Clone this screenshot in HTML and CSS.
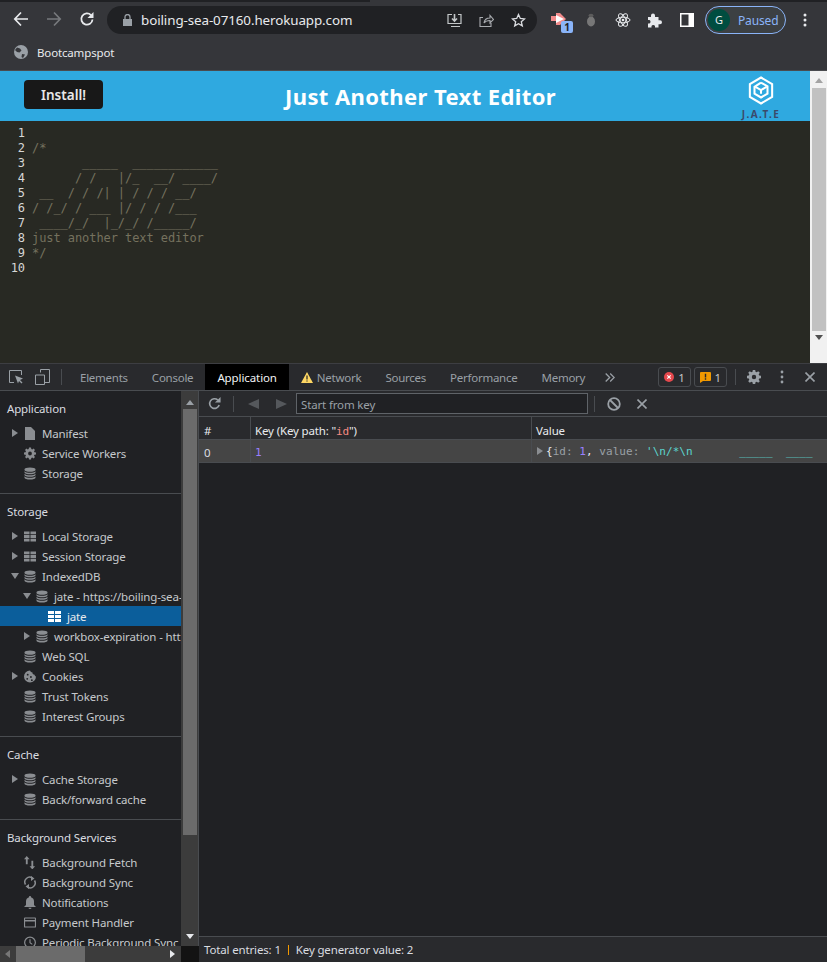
FILE: index.html
```html
<!DOCTYPE html>
<html lang="en">
<head>
<meta charset="utf-8">
<title>J.A.T.E</title>
<link rel="stylesheet" href="styles.css">
</head>
<body>
<svg class="defs" width="0" height="0" aria-hidden="true">
  <defs>
    <symbol id="db" viewBox="0 0 12 12"><path fill="#8a8d91" d="M6 0C3 0 .5.7.5 1.8v.7C.5 3.600 3 4.300 6 4.300s5.500-.7 5.500-1.800v-.7C11.500.7 9 0 6 0zM.5 3.700v1.300C.5 6.100 3 6.800 6 6.800s5.500-.7 5.500-1.800V3.700C10.500 4.700 8.300 5.200 6 5.200S1.500 4.700.5 3.700zm0 2.500v1.300C.5 8.600 3 9.300 6 9.300s5.500-.7 5.500-1.800V6.200C10.500 7.200 8.300 7.700 6 7.700S1.500 7.200.5 6.200zm0 2.500v1.500C.5 11.300 3 12 6 12s5.500-.7 5.500-1.800V8.700C10.500 9.700 8.300 10.200 6 10.200S1.500 9.700.5 8.700z"/></symbol>
    <symbol id="grid" viewBox="0 0 13 11"><path fill="currentColor" d="M0 0h6v3H0zM7 0h6v3H7zM0 4h6v3H0zM7 4h6v3H7zM0 8h6v3H0zM7 8h6v3H7z"/></symbol>
    <symbol id="tri-r" viewBox="0 0 6 8"><path fill="#8a8d91" d="M0 0l6 4-6 4z"/></symbol>
    <symbol id="tri-d" viewBox="0 0 8 6"><path fill="#8a8d91" d="M0 0h8L4 6z"/></symbol>
  </defs>
</svg>

<header class="chrome">
  <div class="tabstrip"><span class="tab-left"></span><span class="tab-active"></span><span class="tab-right"></span></div>
  <div class="navbar">
    <svg class="nav-ic first" width="16" height="16" viewBox="0 0 16 16"><path fill="none" stroke="#e8eaed" stroke-width="1.700" d="M15 8H2M8 1.500L1.800 8 8 14.500"/></svg>
    <svg class="nav-ic" width="16" height="16" viewBox="0 0 16 16"><path fill="none" stroke="#77797d" stroke-width="1.700" d="M1 8h13M8 1.500L14.200 8 8 14.500"/></svg>
    <svg class="nav-ic" width="16" height="16" viewBox="0 0 16 16"><path fill="none" stroke="#e8eaed" stroke-width="1.800" d="M13.500 8.500A5.600 5.600 0 1 1 12 4.200"/><path fill="#e8eaed" d="M14.500 1v6h-6z"/></svg>
    <div class="omnibox">
      <svg class="lock" width="9" height="12" viewBox="0 0 9 12"><path fill="#9aa0a6" d="M0 5h9v7H0z"/><path fill="none" stroke="#9aa0a6" stroke-width="1.300" d="M2 5V3a2.500 2.500 0 0 1 5 0v2"/></svg>
      <span class="url">boiling-sea-07160.herokuapp.com</span>
      <span class="omni-actions">
        <svg width="15" height="15" viewBox="0 0 15 15"><path fill="none" stroke="#c4c7c9" stroke-width="1.200" d="M5 1.500H1v9h13v-9h-3M4 13.500h9"/><path fill="none" stroke="#c4c7c9" stroke-width="1.600" d="M7.500 1v6.500M5 5.500l2.500 2.500L10 5.500"/></svg>
        <svg width="15" height="15" viewBox="0 0 15 15"><path fill="none" stroke="#a9acb0" stroke-width="1.100" d="M12 10v3.500H1V4.500h3M5 10c.5-3.500 3-5 6-5V2.500L14.500 6.500 11 10V7.500C9 7.500 6.500 8 5 10z"/></svg>
        <svg width="15" height="15" viewBox="0 0 15 15"><path fill="none" stroke="#dadce0" stroke-width="1.300" d="M7.500 1.500l1.800 4 4.200.4-3.200 2.800 1 4.200-3.800-2.200-3.800 2.200 1-4.200L1.500 5.900l4.200-.4z"/></svg>
      </span>
    </div>
    <div class="exts">
      <span class="ext-rec">
        <svg width="16" height="12" viewBox="0 0 16 12"><path fill="#f28b8b" d="M0 3h5V0h4l6 6-6 6H5V8H0z"/><path fill="#fff" d="M5 2l8 4-8 4z"/></svg>
        <span class="ext-badge">1</span>
      </span>
      <svg class="ext-bug" width="10" height="14" viewBox="0 0 10 14"><ellipse cx="5" cy="8.500" rx="4" ry="5" fill="#777"/><ellipse cx="5" cy="2.500" rx="2.500" ry="1.800" fill="#5c5c5c"/></svg>
      <svg class="ext-react" width="16" height="14" viewBox="0 0 16 14"><g fill="none" stroke="#e8eaed" stroke-width="1"><ellipse cx="8" cy="7" rx="7" ry="2.800"/><ellipse cx="8" cy="7" rx="7" ry="2.800" transform="rotate(60 8 7)"/><ellipse cx="8" cy="7" rx="7" ry="2.800" transform="rotate(120 8 7)"/></g><circle cx="8" cy="7" r="1.300" fill="#e8eaed"/></svg>
      <svg class="ext-puzzle" width="15" height="15" viewBox="0 0 15 15"><path fill="#e8eaed" d="M1 4h3V2.500a2 2 0 0 1 4 0V4h3.500v3.200H13a2 2 0 0 1 0 4h-1.500V14.500H8v-1.500a2 2 0 0 0-3.500 0v1.500H1V10.500h1.500a2 2 0 0 0 0-3.500H1z"/></svg>
      <svg class="ext-side" width="14" height="14" viewBox="0 0 14 14"><path fill="#fff" d="M0 0h14v14H0z"/><path fill="#35363a" d="M1.500 1.500h7v11h-7z"/></svg>
      <span class="profile"><span class="avatar">G</span><span class="paused">Paused</span></span>
      <svg class="kebab" width="4" height="14" viewBox="0 0 4 14"><g fill="#e8eaed"><circle cx="2" cy="2" r="1.500"/><circle cx="2" cy="7" r="1.500"/><circle cx="2" cy="12" r="1.500"/></g></svg>
    </div>
  </div>
  <div class="bookmarks">
    <svg width="14" height="14" viewBox="0 0 14 14"><circle cx="7" cy="7" r="7" fill="#9aa0a6"/><path fill="#35363a" d="M3 2.500l3 1 1.500 2-2 2-2.500-.5L1 5zM8 9l3 .5-2 3.500-1.500-1z"/></svg>
    <span>Bootcampspot</span>
  </div>
</header>

<section class="viewport">
  <div class="page">
    <div class="app-header">
      <button class="install" type="button">Install!</button>
      <h1 class="app-title">Just Another Text Editor</h1>
      <div class="logo">
        <svg width="26" height="29" viewBox="0 0 28 31"><g fill="none" stroke="#fff" stroke-width="2.200"><path d="M14 1.500L26 8.500V22.500L14 29.500 2 22.500V8.500z"/><path d="M14 7L21 11V19L14 23 7 19V11.500L14 7"/><path d="M8 11.500L14 15 20 11.500M14 15V19"/></g></svg>
        <span class="logo-text">J.A.T.E</span>
      </div>
    </div>
    <div class="editor">
      <div class="gutter"><span>1</span><span>2</span><span>3</span><span>4</span><span>5</span><span>6</span><span>7</span><span>8</span><span>9</span><span>10</span></div>
      <pre class="code">

/*
       _____  ____________
      / /   |/_  __/ ____/
 __  / / /| | / / / __/
/ /_/ / ___ |/ / / /___
 ____/_/  |_/_/ /_____/
just another text editor
*/
</pre>
    </div>
  </div>
  <div class="vscroll">
    <span class="vs-up"></span>
    <span class="vs-thumb"></span>
    <span class="vs-down"></span>
  </div>
</section>

<section class="devtools">
  <div class="dt-tabs">
    <svg class="dt-ic first" width="14" height="14" viewBox="0 0 14 14"><path fill="none" stroke="#9aa0a6" stroke-width="1" d="M5 12.500H.5V.5h12V5"/><path fill="#9aa0a6" d="M6 5.500l8 3-3 1.500 2.500 2.500-1 1-2.500-2.500L9 13.500z"/></svg>
    <svg class="dt-ic" width="15" height="16" viewBox="0 0 15 16"><path fill="none" stroke="#9aa0a6" stroke-width="1" d="M5.500 3.500V.5h9v13H10M.5 6h9v9.500h-9z"/></svg>
    <span class="vsep"></span>
    <span class="tab">Elements</span>
    <span class="tab">Console</span>
    <span class="tab active">Application</span>
    <span class="tab warn"><svg width="12" height="11" viewBox="0 0 12 11"><path fill="#fdd663" d="M6 0l6 11H0z"/><path fill="#202124" d="M5.400 3.500h1.200v4H5.400zM5.400 8.400h1.200v1.200H5.400z"/></svg>Network</span>
    <span class="tab">Sources</span>
    <span class="tab">Performance</span>
    <span class="tab">Memory</span>
    <svg class="more" width="10" height="9" viewBox="0 0 10 9"><path fill="none" stroke="#9aa0a6" stroke-width="1.300" d="M.7.500l4 4-4 4M5.200.500l4 4-4 4"/></svg>
    <span class="dt-right">
      <span class="pill"><svg width="10" height="10" viewBox="0 0 10 10"><circle cx="5" cy="5" r="5" fill="#e5484d"/><path stroke="#fff" stroke-width="1.200" d="M3.300 3.300l3.400 3.400M6.700 3.300L3.300 6.700"/></svg>1</span>
      <span class="pill"><svg width="11" height="11" viewBox="0 0 11 11"><path fill="#f29900" d="M1 0h9a1 1 0 0 1 1 1v7a1 1 0 0 1-1 1H3l-3 2V1a1 1 0 0 1 1-1z"/><path fill="#292a2d" d="M4.800 1.800h1.400v3.700H4.800zM4.800 6.300h1.400v1.400H4.800z"/></svg>1</span>
      <span class="vsep"></span>
      <svg class="gear" width="14" height="14" viewBox="0 0 14 14"><path fill="#9aa0a6" fill-rule="evenodd" d="M5.800 0h2.400l.3 1.800 1.200.5L11.200 1.200 12.800 2.800 11.700 4.300l.5 1.200 1.800.3v2.400l-1.800.3-.5 1.200 1.100 1.500-1.600 1.600-1.500-1.100-1.200.5-.3 1.800H5.800l-.3-1.800-1.200-.5-1.500 1.100-1.600-1.600 1.100-1.500-.5-1.200L0 8.200V5.800l1.800-.3.500-1.200L1.200 2.800 2.800 1.200l1.500 1.100 1.200-.5zM7 4.800a2.200 2.200 0 1 0 0 4.400 2.200 2.200 0 0 0 0-4.400z"/></svg>
      <svg class="dt-kebab" width="4" height="14" viewBox="0 0 4 14"><g fill="#9aa0a6"><circle cx="2" cy="2" r="1.400"/><circle cx="2" cy="7" r="1.400"/><circle cx="2" cy="12" r="1.400"/></g></svg>
      <svg class="dt-close" width="10" height="10" viewBox="0 0 10 10"><path stroke="#9aa0a6" stroke-width="1.600" d="M.5.500l9 9M9.500.5l-9 9"/></svg>
    </span>
  </div>

  <div class="dt-body">
    <aside class="side">
      <div class="side-main">
        <nav class="tree">
          <div class="sec">
            <div class="sec-h">Application</div>
            <div class="row l1"><svg class="tw"><use href="#tri-r"/></svg><svg class="ic" width="10" height="13" viewBox="0 0 10 13"><path fill="#8a8d91" d="M0 0h6l4 4v9H0z"/></svg><span>Manifest</span></div>
            <div class="row l1"><i class="tw"></i><svg class="ic" width="13" height="13" viewBox="0 0 14 14"><path fill="#8a8d91" fill-rule="evenodd" d="M5.800 0h2.400l.3 1.800 1.200.5L11.200 1.200 12.800 2.800 11.700 4.300l.5 1.200 1.800.3v2.400l-1.800.3-.5 1.200 1.100 1.500-1.600 1.600-1.500-1.100-1.200.5-.3 1.800H5.800l-.3-1.800-1.200-.5-1.500 1.100-1.600-1.600 1.100-1.500-.5-1.200L0 8.200V5.800l1.800-.3.500-1.200L1.200 2.800 2.800 1.200l1.500 1.100 1.200-.5zM7 4.800a2.200 2.200 0 1 0 0 4.400 2.200 2.200 0 0 0 0-4.400z"/></svg><span>Service Workers</span></div>
            <div class="row l1"><i class="tw"></i><svg class="ic"><use href="#db"/></svg><span>Storage</span></div>
          </div>
          <div class="sec">
            <div class="sec-h">Storage</div>
            <div class="row l1"><svg class="tw"><use href="#tri-r"/></svg><svg class="ic gr"><use href="#grid"/></svg><span>Local Storage</span></div>
            <div class="row l1"><svg class="tw"><use href="#tri-r"/></svg><svg class="ic gr"><use href="#grid"/></svg><span>Session Storage</span></div>
            <div class="row l1"><svg class="tw down"><use href="#tri-d"/></svg><svg class="ic"><use href="#db"/></svg><span>IndexedDB</span></div>
            <div class="row l2"><svg class="tw down"><use href="#tri-d"/></svg><svg class="ic"><use href="#db"/></svg><span>jate - https://boiling-sea-07160.herokuapp.com</span></div>
            <div class="row l3 sel"><svg class="ic wh"><use href="#grid"/></svg><span>jate</span></div>
            <div class="row l2"><svg class="tw"><use href="#tri-r"/></svg><svg class="ic"><use href="#db"/></svg><span>workbox-expiration - https://boiling-sea-07160</span></div>
            <div class="row l1"><i class="tw"></i><svg class="ic"><use href="#db"/></svg><span>Web SQL</span></div>
            <div class="row l1"><svg class="tw"><use href="#tri-r"/></svg><svg class="ic" width="13" height="13" viewBox="0 0 13 13"><path fill="#8a8d91" fill-rule="evenodd" d="M6.500 0C7 1.500 8 2 9 2c0 1.500 1 2.500 2.500 2.500C11.500 5.500 12 6 13 6.500A6.500 6.500 0 1 1 6.500 0zM4 3.500a1 1 0 1 0 0 2 1 1 0 0 0 0-2zM3.500 8a1 1 0 1 0 0 2 1 1 0 0 0 0-2zM7.500 6a1 1 0 1 0 0 2 1 1 0 0 0 0-2zM8.500 9.500a1 1 0 1 0 0 2 1 1 0 0 0 0-2z"/></svg><span>Cookies</span></div>
            <div class="row l1"><i class="tw"></i><svg class="ic"><use href="#db"/></svg><span>Trust Tokens</span></div>
            <div class="row l1"><i class="tw"></i><svg class="ic"><use href="#db"/></svg><span>Interest Groups</span></div>
          </div>
          <div class="sec">
            <div class="sec-h">Cache</div>
            <div class="row l1"><svg class="tw"><use href="#tri-r"/></svg><svg class="ic"><use href="#db"/></svg><span>Cache Storage</span></div>
            <div class="row l1"><i class="tw"></i><svg class="ic"><use href="#db"/></svg><span>Back/forward cache</span></div>
          </div>
          <div class="sec">
            <div class="sec-h">Background Services</div>
            <div class="row l1"><i class="tw"></i><svg class="ic" width="13" height="14" viewBox="0 0 13 14"><path fill="#8a8d91" d="M3 0l3 3.500H4V9H2V3.500H0zM8 5h2v6h2l-3 3.500L6 11h2z"/></svg><span>Background Fetch</span></div>
            <div class="row l1"><i class="tw"></i><svg class="ic" width="12" height="13" viewBox="0 0 12 13"><path fill="none" stroke="#8a8d91" stroke-width="1.500" d="M1.500 8.500A4.800 4.800 0 0 1 8.500 2.200M10.500 4.500A4.800 4.800 0 0 1 3.500 10.800"/><path fill="#8a8d91" d="M7 0l3.500 2.500L7 5zM5 8l-3.500 2.500L5 13z"/></svg><span>Background Sync</span></div>
            <div class="row l1"><i class="tw"></i><svg class="ic" width="12" height="13" viewBox="0 0 12 13"><path fill="#8a8d91" d="M6 0a1 1 0 0 1 1 1.200C9 1.800 10 3.500 10 5.500V9l2 2H0l2-2V5.500C2 3.500 3 1.800 5 1.200A1 1 0 0 1 6 0zM4.500 11.700h3a1.500 1.300 0 0 1-3 0z"/></svg><span>Notifications</span></div>
            <div class="row l1"><i class="tw"></i><svg class="ic" width="13" height="11" viewBox="0 0 13 11"><path fill="#8a8d91" fill-rule="evenodd" d="M1 0h11a1 1 0 0 1 1 1v9a1 1 0 0 1-1 1H1a1 1 0 0 1-1-1V1a1 1 0 0 1 1-1zm.2 1.200v1.500h10.600V1.200zm0 3.300v5.300h10.600V4.500z"/></svg><span>Payment Handler</span></div>
            <div class="row l1"><i class="tw"></i><svg class="ic" width="13" height="13" viewBox="0 0 13 13"><circle cx="6.500" cy="6.500" r="5.800" fill="none" stroke="#8a8d91" stroke-width="1.300"/><path fill="none" stroke="#8a8d91" stroke-width="1.200" d="M6.500 3v3.800L9 8.500"/></svg><span>Periodic Background Sync</span></div>
          </div>
        </nav>
        <div class="sb-v">
          <svg class="sb-arrow" width="8" height="5" viewBox="0 0 8 5"><path fill="#9aa0a6" d="M4 0l4 5H0z"/></svg>
          <span class="sb-thumb"></span>
          <svg class="sb-arrow" width="8" height="5" viewBox="0 0 8 5"><path fill="#e8eaed" d="M0 0h8L4 5z"/></svg>
        </div>
      </div>
      <div class="sb-h">
        <svg class="sbh-l" width="5" height="8" viewBox="0 0 5 8"><path fill="#777" d="M5 0v8L0 4z"/></svg>
        <span class="sbh-thumb"></span>
        <svg class="sbh-r" width="5" height="8" viewBox="0 0 5 8"><path fill="#e8eaed" d="M0 0v8l5-4z"/></svg>
        <span class="sb-corner"></span>
      </div>
    </aside>

    <main class="main">
      <div class="idb-bar">
        <svg class="ref" width="13" height="13" viewBox="0 0 14 14"><path fill="none" stroke="#9aa0a6" stroke-width="1.800" d="M12 8.500A5.200 5.200 0 1 1 10.500 3.200"/><path fill="#9aa0a6" d="M13.500 0v6h-6z"/></svg>
        <span class="vsep s1"></span>
        <svg class="pg" width="11" height="10" viewBox="0 0 11 10"><path fill="#55585c" d="M11 0v10L0 5z"/></svg>
        <svg class="pg p2" width="11" height="10" viewBox="0 0 11 10"><path fill="#55585c" d="M0 0v10l11-5z"/></svg>
        <span class="keybox">Start from key</span>
        <span class="vsep s2"></span>
        <svg class="block" width="14" height="14" viewBox="0 0 14 14"><circle cx="7" cy="7" r="5.800" fill="none" stroke="#9aa0a6" stroke-width="1.800"/><path stroke="#9aa0a6" stroke-width="1.800" d="M3 3l8 8"/></svg>
        <svg class="clear" width="10" height="10" viewBox="0 0 10 10"><path stroke="#9aa0a6" stroke-width="1.600" d="M.5.500l9 9M9.500.5l-9 9"/></svg>
      </div>
      <div class="tbl-head">
        <span class="cell">#</span>
        <span class="cell">Key (Key path: "<b class="kw">id</b>")</span>
        <span class="cell">Value</span>
      </div>
      <div class="tbl-row">
        <span class="cell">0</span>
        <span class="cell mono num">1</span>
        <span class="cell mono val"><svg width="6" height="8" viewBox="0 0 6 8"><use href="#tri-r"/></svg><span class="obj"><span class="brace">{</span><span class="prop">id:</span> <span class="num">1</span><span class="brace">,</span> <span class="prop">value:</span> <span class="str">'\n/*\n       _____  ____</span></span></span>
      </div>
      <div class="tbl-empty"></div>
      <footer class="summary">Total entries: 1<span class="mid"></span>Key generator value: 2</footer>
    </main>
  </div>
</section>
</body>
</html>
```

FILE: styles.css
```css
* { box-sizing: border-box; }
html, body { margin: 0; padding: 0; }
body {
  width: 827px;
  height: 962px;
  overflow: hidden;
  display: flex;
  flex-direction: column;
  background: #202124;
  font-family: "Noto Sans", sans-serif;
  font-size: 11.500px;
  letter-spacing: -.15px;
  color: #dadce0;
}
.defs { display: block; height: 0; }
svg { display: block; flex: none; }

/* browser chrome */
.chrome { height: 71px; background: #35363a; border-bottom: 1px solid #4a4b4f; flex: none; }
.tabstrip { height: 2px; display: flex; }
.tab-left { width: 370px; background: #202124; }
.tab-active { width: 190px; }
.tab-right { flex: 1; background: #202124; }
.navbar { height: 32px; padding-top: 4px; display: flex; align-items: center; }
.nav-ic { margin-left: 17px; margin-top: -2px; }
.nav-ic.first { margin-left: 13px; }
.omnibox {
  margin-left: 12px;
  width: 430px;
  height: 28px;
  border-radius: 14px;
  background: #202124;
  display: flex;
  align-items: center;
  padding-left: 16px;
}
.url { margin-left: 9px; font-size: 13.400px; color: #e8eaed; letter-spacing: -.1px; }
.omni-actions { margin-left: auto; display: flex; gap: 17px; padding-right: 11px; }
.exts { display: flex; align-items: center; flex: 1; }
.ext-rec { position: relative; width: 18px; height: 14px; margin-left: 14px; }
.ext-badge {
  position: absolute;
  left: 10px;
  top: 8px;
  width: 12px;
  height: 12px;
  border-radius: 2px;
  background: #8ab4f8;
  color: #202124;
  font-size: 10px;
  font-weight: 700;
  line-height: 12px;
  text-align: center;
}
.ext-bug { margin-left: 17px; }
.ext-react { margin-left: 19px; }
.ext-puzzle { margin-left: 16px; }
.ext-side { margin-left: 18px; }
.profile {
  margin-left: 11px;
  width: 81px;
  height: 28px;
  border: 1px solid #8ab4f8;
  border-radius: 14px;
  background: #3c4043;
  display: flex;
  align-items: center;
  padding-left: 2px;
}
.avatar {
  width: 22px;
  height: 22px;
  border-radius: 50%;
  background: #004d40;
  color: #e8eaed;
  font-size: 11px;
  line-height: 22px;
  text-align: center;
}
.paused { margin-left: 8px; color: #8ab4f8; font-size: 12px; }
.kebab { margin-left: 17px; }
.bookmarks { height: 36px; display: flex; align-items: center; padding: 0 0 0 14px; gap: 9px; color: #e8eaed; }

/* inspected page */
.viewport { height: 292px; display: flex; flex: none; }
.page { flex: 1; display: flex; flex-direction: column; min-width: 0; }
.app-header {
  height: 50px;
  background: #2fa9e0;
  display: flex;
  align-items: center;
  padding: 0 28px 0 24px;
}
.install {
  width: 79px;
  height: 29px;
  border: 0;
  border-radius: 4px;
  background: #181818;
  color: #e8e8e8;
  font: 600 13.500px "Noto Sans", sans-serif;
  letter-spacing: 0;
  margin-top: -3px;
  padding: 0;
}
.app-title {
  margin: 0 0 0 182px;
  font-size: 22px;
  line-height: 1;
  font-weight: 700;
  color: #fff;
  letter-spacing: .4px;
  white-space: nowrap;
}
.logo { margin-left: auto; display: flex; flex-direction: column; align-items: center; width: 42px; padding-top: 3px; }
.logo-text { font-size: 10px; font-weight: 700; color: #3b4a6b; letter-spacing: 1.400px; line-height: 10px; margin-top: 4px; white-space: nowrap; }
.editor { flex: 1; background: #282923; display: flex; padding-top: 5px; font-family: "DejaVu Sans Mono", monospace; font-size: 12px; line-height: 15px; letter-spacing: -.07px; }
.gutter { width: 32px; padding-right: 7px; display: flex; flex-direction: column; align-items: flex-end; color: #d6d6d6; }
.code { margin: 0; font: inherit; color: #75715e; }
.vscroll { width: 17px; background: #f1f1f1; display: flex; flex-direction: column; align-items: center; }
.vs-up { margin-top: 7px; border: 4px solid transparent; border-top: 0; border-bottom: 5px solid #a3a3a3; }
.vs-thumb { width: 14px; height: 243px; margin-top: 5px; background: #c1c1c1; }
.vs-down { margin-top: 4px; border: 4px solid transparent; border-bottom: 0; border-top: 5px solid #505050; }

/* devtools */
.devtools { flex: 1; display: flex; flex-direction: column; min-height: 0; }
.dt-tabs {
  height: 28px;
  background: #292a2d;
  border-top: 1px solid #3d3e42;
  border-bottom: 1px solid #494c50;
  display: flex;
  align-items: center;
  color: #9aa0a6;
}
.dt-ic.first { margin-left: 9px; }
.dt-ic { margin-left: 12px; }
.vsep { width: 1px; height: 16px; background: #494c50; }
.dt-tabs > .vsep { margin: 0 6px 0 11px; }
.tab { height: 26px; padding: 0 12px; display: flex; align-items: center; gap: 5px; white-space: nowrap; letter-spacing: -.25px; }
.tab.active { background: #000; color: #f1f3f4; letter-spacing: -.1px; }
.tab.warn { gap: 4px; }
.more { margin-left: 8px; }
.dt-right { margin-left: auto; display: flex; align-items: center; }
.pill {
  height: 20px;
  padding: 0 5px;
  margin-right: 3px;
  border: 1px solid #494c50;
  border-radius: 3px;
  display: flex;
  align-items: center;
  gap: 4px;
  color: #c4c7c9;
}
.dt-right .vsep { margin: 0 11px 0 5px; }
.gear { margin-right: 19px; }
.dt-kebab { margin-right: 21px; }
.dt-close { margin-right: 12px; }
.dt-body { flex: 1; display: flex; min-height: 0; }

/* sidebar */
.side { width: 199px; display: flex; flex-direction: column; flex: none; min-height: 0; }
.side-main { flex: 1; display: flex; min-height: 0; }
.tree { width: 181px; overflow: hidden; }
.sec { padding-bottom: 10px; border-bottom: 1px solid #494c50; }
.sec-h { height: 32px; padding: 8px 0 0 7px; line-height: 20px; color: #dadce0; }
.row { height: 20px; display: flex; align-items: center; white-space: nowrap; color: #c6c9cc; overflow: hidden; }
.row .tw { width: 6px; height: 8px; flex: none; }
.row .tw.down { width: 8px; height: 6px; margin-left: -1px; margin-right: -1px; }
.row .ic { width: 12px; height: 13px; margin-left: 6px; flex: none; }
.row .ic.gr { color: #8a8d91; }
.row .ic.wh { color: #fff; height: 11px; width: 13px; margin-left: 0; }
.row span { margin: 0 0 0 6px; }
.l1 { padding-left: 12px; }
.l2 { padding-left: 24px; }
.l3 { padding-left: 48px; }
.sel { background: #0b5e9b; color: #e8eaed; }
.sb-v { width: 18px; background: #3c3c3c; border-right: 1px solid #494c50; display: flex; flex-direction: column; align-items: center; padding-top: 9px; }
.sb-thumb { width: 14px; height: 426px; margin: 4px 0 99px; background: #6b6b6b; }
.sb-h { height: 16px; background: #3c3c3c; display: flex; align-items: center; flex: none; }
.sbh-l { margin-left: 5px; }
.sbh-thumb { width: 69px; height: 16px; margin-left: 6px; background: #6b6b6b; }
.sbh-r { margin-left: 85px; }
.sb-corner { width: 18px; height: 16px; margin-left: 6px; background: #131313; }

/* main pane */
.main { flex: 1; display: flex; flex-direction: column; min-width: 0; }
.idb-bar { height: 26px; background: #292a2d; border-bottom: 1px solid #494c50; display: flex; align-items: center; }
.ref { margin-left: 9px; }
.idb-bar .s1 { margin-left: 12px; }
.pg { margin-left: 14px; }
.pg.p2 { margin-left: 17px; }
.keybox {
  margin-left: 9px;
  width: 292px;
  height: 21px;
  border: 1px solid #5f6368;
  background: #202124;
  color: #9aa0a6;
  padding-left: 4px;
  line-height: 21px;
}
.idb-bar .s2 { margin-left: 6px; }
.block { margin-left: 12px; }
.clear { margin-left: 16px; }
.tbl-head, .tbl-row { display: grid; grid-template-columns: 52px 281px 1fr; }
.tbl-head { height: 23px; background: #292a2d; border-bottom: 1px solid #494c50; color: #e8eaed; }
.tbl-head .cell { line-height: 27px; }
.tbl-row { height: 23px; background: #454545; border-bottom: 1px solid #494c50; }
.cell { padding-left: 4px; border-right: 1px solid #494c50; line-height: 25px; white-space: nowrap; overflow: hidden; }
.cell:first-child { padding-left: 5px; }
.cell:last-child { border-right: 0; }
.kw { font-family: "DejaVu Sans Mono", monospace; font-weight: 400; font-size: 11px; color: #f28b82; }
.mono { font-family: "DejaVu Sans Mono", monospace; font-size: 11px; white-space: pre; }
.num { color: #9980ff; }
.val { display: flex; align-items: center; padding-left: 5px; }
.val svg { margin-right: 3px; }
.obj { letter-spacing: .04px; }
.brace { color: #e8eaed; }
.prop { color: #9aa0a6; }
.str { color: #5cd5cf; }
.tbl-empty { flex: 1; }
.summary { height: 26px; background: #292a2d; border-top: 1px solid #494c50; padding-left: 5px; display: flex; align-items: center; color: #dadce0; }
.mid { width: 1px; height: 10px; margin: 0 7px; background: #f29900; }
```
